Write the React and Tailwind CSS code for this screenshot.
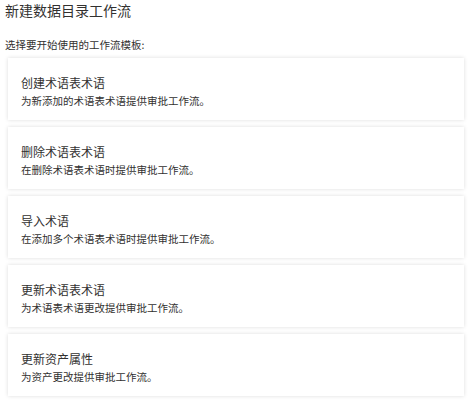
const templates = [
  { title: '创建术语表术语', desc: '为新添加的术语表术语提供审批工作流。' },
  { title: '删除术语表术语', desc: '在删除术语表术语时提供审批工作流。' },
  { title: '导入术语', desc: '在添加多个术语表术语时提供审批工作流。' },
  { title: '更新术语表术语', desc: '为术语表术语更改提供审批工作流。' },
  { title: '更新资产属性', desc: '为资产更改提供审批工作流。' },
]

function TemplateCard({ title, desc }) {
  return (
    <button className="ml-[8px] flex h-[62px] w-[456px] flex-col items-start bg-white pl-[13px] pt-[17px] text-left shadow-[0_0_4px_rgba(0,0,0,0.14)]">
      <span className="text-[12px] leading-[15px] text-[#323130]">{title}</span>
      <span className="mt-[3px] text-[10.5px] leading-[16px] text-[#323130]">{desc}</span>
    </button>
  )
}

export default function App() {
  return (
    <div className="min-h-[402px] w-[474px] bg-white font-['Noto_Sans_CJK_SC',sans-serif]">
      {/* Header */}
      <h1 className="pl-[5px] pt-[1px] text-[14px] font-normal leading-[18px] text-[#323130]">
        新建数据目录工作流
      </h1>
      <p className="mt-[18px] pl-[5px] text-[10.5px] leading-[16px] text-[#323130]">
        选择要开始使用的工作流模板:
      </p>

      {/* Templates */}
      <div className="mt-[5px] flex flex-col gap-[7px]">
        {templates.map(t => (
          <TemplateCard key={t.title} title={t.title} desc={t.desc} />
        ))}
      </div>
    </div>
  )
}
